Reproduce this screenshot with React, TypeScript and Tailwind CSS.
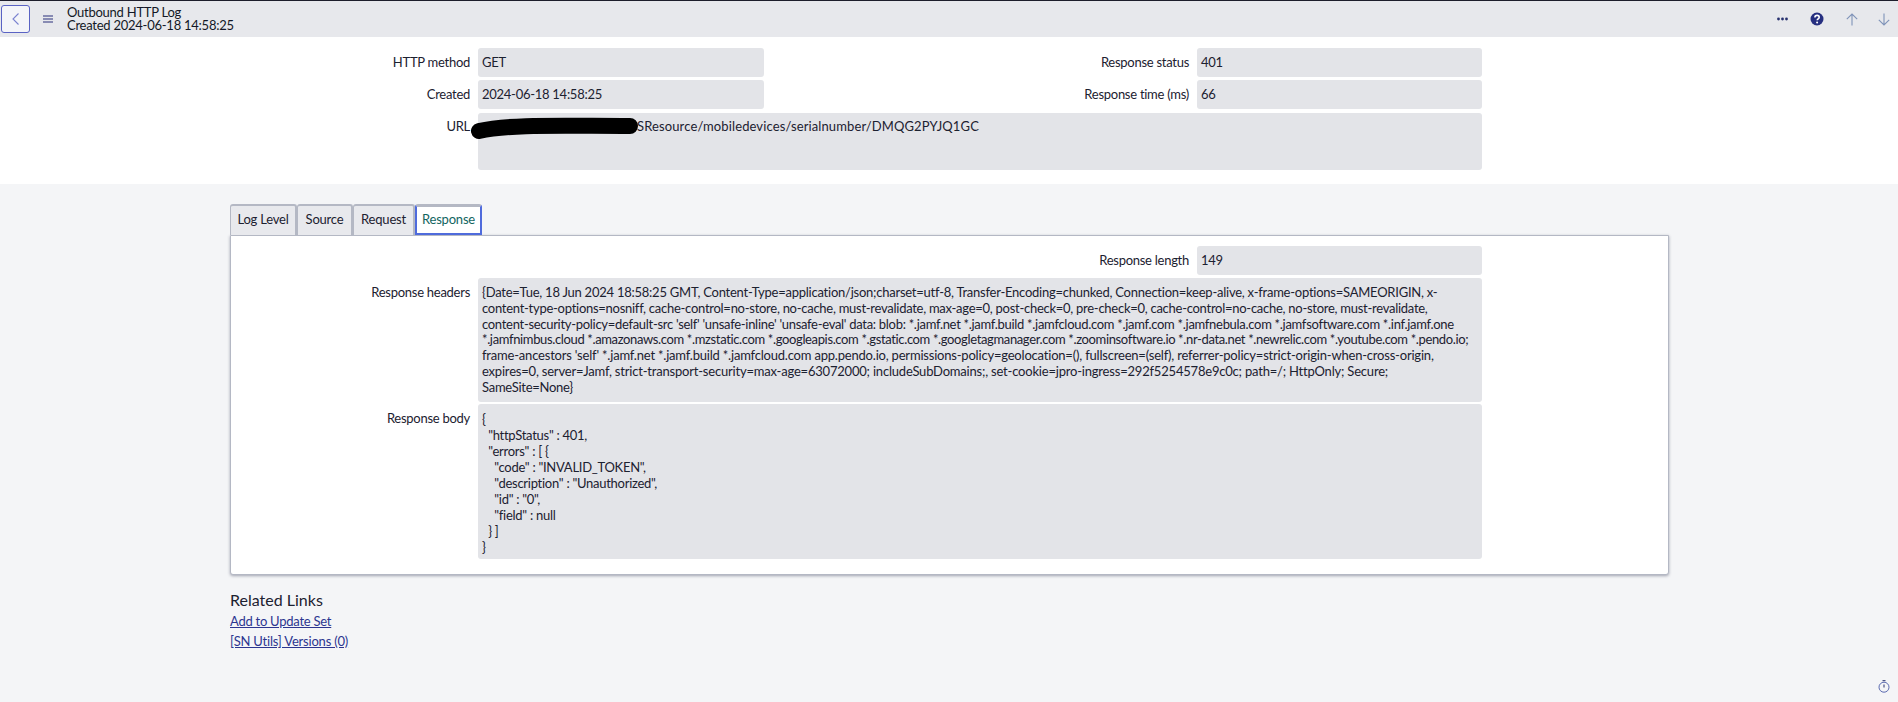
import React from "react";

const FONT = "font-['Lato','Open_Sans',sans-serif]";

// line breaks and fit follow the record view, which wraps at these points
const responseHeaders = [
  { text: "{Date=Tue, 18 Jun 2024 18:58:25 GMT, Content-Type=application/json;charset=utf-8, Transfer-Encoding=chunked, Connection=keep-alive, x-frame-options=SAMEORIGIN, x-", fit: "tracking-[-0.24px]" },
  { text: "content-type-options=nosniff, cache-control=no-store, no-cache, must-revalidate, max-age=0, post-check=0, pre-check=0, cache-control=no-cache, no-store, must-revalidate,", fit: "tracking-[-0.27px]" },
  { text: "content-security-policy=default-src 'self' 'unsafe-inline' 'unsafe-eval' data: blob: *.jamf.net *.jamf.build *.jamfcloud.com *.jamf.com *.jamfnebula.com *.jamfsoftware.com *.inf.jamf.one", fit: "tracking-[-0.295px]" },
  { text: "*.jamfnimbus.cloud *.amazonaws.com *.mzstatic.com *.googleapis.com *.gstatic.com *.googletagmanager.com *.zoominsoftware.io *.nr-data.net *.newrelic.com *.youtube.com *.pendo.io;", fit: "tracking-[-0.36px]" },
  { text: "frame-ancestors 'self' *.jamf.net *.jamf.build *.jamfcloud.com app.pendo.io, permissions-policy=geolocation=(), fullscreen=(self), referrer-policy=strict-origin-when-cross-origin,", fit: "tracking-[-0.2px]" },
  { text: "expires=0, server=Jamf, strict-transport-security=max-age=63072000; includeSubDomains;, set-cookie=jpro-ingress=292f5254578e9c0c; path=/; HttpOnly; Secure;", fit: "tracking-[-0.2px]" },
  { text: "SameSite=None}", fit: "tracking-[-0.27px]" },
];

const responseBody = `{
  "httpStatus" : 401,
  "errors" : [ {
    "code" : "INVALID_TOKEN",
    "description" : "Unauthorized",
    "id" : "0",
    "field" : null
  } ]
}`;

function Label({ children, className = "" }: { children: React.ReactNode; className?: string }) {
  return (
    <div className={`pt-[7px] pr-2 text-right text-[13px] leading-[15.6px] tracking-[-0.27px] ${className}`}>
      {children}
    </div>
  );
}

function Value({ children, className = "" }: { children: React.ReactNode; className?: string }) {
  return (
    <div className={`rounded-[3px] bg-[#e3e4e8] pr-[5px] pl-[4px] pt-[7px] text-[13px] leading-[15.8px] tracking-[-0.27px] ${className}`}>
      {children}
    </div>
  );
}

function Tab({ label, active = false, className = "" }: { label: string; active?: boolean; className?: string }) {
  if (active) {
    return (
      <div
        className={`flex h-[31px] items-center justify-center rounded-t-[3px] border-2 border-t-[3px] border-[#4f6bdc] border-t-[#b4b8c4] bg-white text-[13px] tracking-[-0.2px] text-[#12655f] ${className}`}
      >
        {label}
      </div>
    );
  }
  return (
    <div
      className={`flex h-[31px] items-center justify-center rounded-t-[3px] border-2 border-b-0 border-l-[1px] border-[#b4b8c4] bg-[#e8e9ed] pb-px text-[13px] tracking-[-0.2px] ${className}`}
    >
      {label}
    </div>
  );
}

export default function App() {
  return (
    <div className={`flex min-h-[702px] flex-col bg-[#f4f5f7] text-[#1c2130] ${FONT}`}>
      {/* Title bar */}
      <div className="flex h-[37px] items-center border-t border-[#1d1d2b] bg-[#e7e8ec] pl-px">
        <button className="flex h-[28px] w-[29px] items-center justify-center rounded-[3px] border border-[#5a63c4] bg-[#f4f5f9]">
          <svg width="10" height="14" viewBox="0 0 10 14" fill="none" stroke="#7a82d0" strokeWidth="1.1">
            <path d="M7.5 1.5 2 7l5.5 5.5" />
          </svg>
        </button>
        <svg className="ml-[13px]" width="10" height="8" viewBox="0 0 10 8" fill="none" stroke="#2b2f7a" strokeWidth="1.1">
          <path d="M0 1h10M0 4h10M0 7h10" />
        </svg>
        <div className="ml-[14px] text-[13px] leading-[13.5px] tracking-[-0.25px] text-[#131826]">
          <div>Outbound HTTP Log</div>
          <div>Created 2024-06-18 14:58:25</div>
        </div>
        <div className="ml-auto flex items-center">
          <svg width="11" height="4" viewBox="0 0 11 4" fill="#27306e">
            <circle cx="1.5" cy="2" r="1.4" />
            <circle cx="5.5" cy="2" r="1.4" />
            <circle cx="9.5" cy="2" r="1.4" />
          </svg>
          <svg className="ml-[22px]" width="14" height="14" viewBox="0 0 14 14">
            <circle cx="7" cy="7" r="6.5" fill="#262f80" />
            <path d="M4.9 5.4c0-1.3 1-2 2.2-2s2.1.7 2.1 1.8c0 1.6-2 1.6-2 3" fill="none" stroke="#fff" strokeWidth="1.6" />
            <circle cx="7.1" cy="10.6" r="1" fill="#fff" />
          </svg>
          <svg className="ml-[22px]" width="12" height="13" viewBox="0 0 12 13" fill="none" stroke="#7f93b8" strokeWidth="1.1">
            <path d="M6 12.5V1M.8 6.2 6 1l5.2 5.2" />
          </svg>
          <svg className="ml-[20px] mr-2" width="12" height="13" viewBox="0 0 12 13" fill="none" stroke="#7f93b8" strokeWidth="1.1">
            <path d="M6 .5V12M.8 6.8 6 12l5.2-5.2" />
          </svg>
        </div>
      </div>

      {/* Top form */}
      <div className="bg-white pt-[11px] pb-[14px]">
        <div className="flex h-[29px]">
          <Label className="w-[478px]">HTTP method</Label>
          <Value className="w-[286px]">GET</Value>
          <Label className="w-[433px]">Response status</Label>
          <Value className="w-[285px]">401</Value>
        </div>
        <div className="mt-[3px] flex h-[29px]">
          <Label className="w-[478px]">Created</Label>
          <Value className="w-[286px]">2024-06-18 14:58:25</Value>
          <Label className="w-[433px]">Response time (ms)</Label>
          <Value className="w-[285px]">66</Value>
        </div>
        <div className="mt-1 flex h-[57px]">
          <Label className="w-[478px] !pt-[6px]">URL</Label>
          <Value className="relative w-[1004px] !pl-[159px] !pt-[6px] !tracking-[0.12px]">
            <svg className="absolute top-[2px] -left-[8px]" width="170" height="26" viewBox="0 0 170 26">
              <path d="M9 16C40 9 90 11 160 11" fill="none" stroke="#000" strokeWidth="16" strokeLinecap="round" />
            </svg>
            SResource/mobiledevices/serialnumber/DMQG2PYJQ1GC
          </Value>
        </div>
      </div>

      {/* Tabbed section */}
      <div className="ml-[230px] mt-5 w-[1439px]">
        <div className="flex h-[31px]">
          <Tab label="Log Level" className="w-[67px] border-l-[1px]" />
          <Tab label="Source" className="w-[56px]" />
          <Tab label="Request" className="w-[62px]" />
          <Tab label="Response" active className="w-[67px]" />
        </div>
        <div className="h-[340px] rounded-b-[3px] border border-[#b4b8c4] bg-white pt-[10px] shadow-[0_1px_3px_rgba(60,65,90,0.45)]">
          <div className="flex h-[29px] justify-end pr-[186px]">
            <Label>Response length</Label>
            <Value className="w-[285px]">149</Value>
          </div>
          <div className="mt-[3px] flex">
            <Label className="w-[247px]">Response headers</Label>
            <Value className="h-[124px] w-[1004px]">
              {responseHeaders.map((line) => (
                <div key={line.text} className={`whitespace-nowrap ${line.fit}`}>
                  {line.text}
                </div>
              ))}
            </Value>
          </div>
          <div className="mt-[2px] flex">
            <Label className="w-[247px]">Response body</Label>
            <Value className="h-[155px] w-[1004px] whitespace-pre-wrap !leading-[16px]">{responseBody}</Value>
          </div>
        </div>
      </div>

      {/* Related links and timing */}
      <div className="mt-[15px] flex items-end justify-between pl-[230px] pr-[8px]">
        <div>
          <div className="text-[16px] leading-[19px]">Related Links</div>
          <a className="mt-[5px] block text-[13px] leading-[15.6px] tracking-[-0.25px] text-[#2c3590] underline">Add to Update Set</a>
          <a className="mt-[4px] block text-[13px] leading-[15.6px] tracking-[-0.2px] text-[#2c3590] underline">[SN Utils] Versions (0)</a>
        </div>
        <svg className="mb-[-44px]" width="12" height="13" viewBox="0 0 12 13" fill="none" stroke="#5a6ab0" strokeWidth="1">
          <circle cx="6" cy="7.2" r="5" />
          <path d="M6 4.5v3M4.5 .7h3" stroke="#27306e" />
        </svg>
      </div>
    </div>
  );
}
